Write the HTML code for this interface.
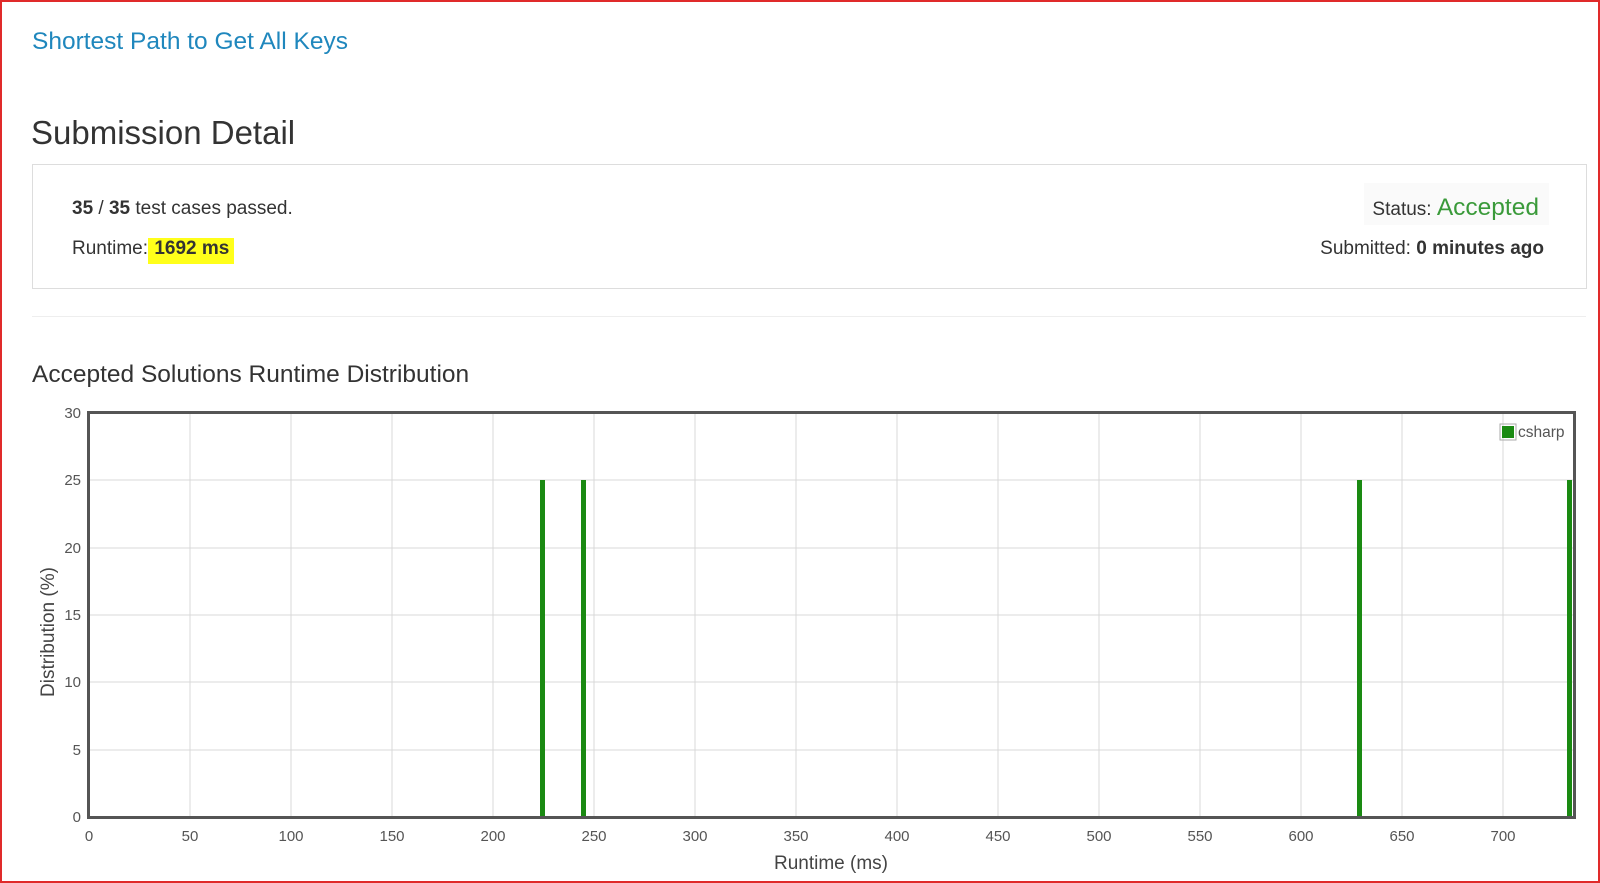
<!DOCTYPE html>
<html><head><meta charset="utf-8"><style>
html,body{margin:0;padding:0;background:#fff;}
body{width:1600px;height:883px;position:relative;overflow:hidden;font-family:"Liberation Sans",Arial,sans-serif;color:#333;}
.frame{position:absolute;left:0;top:0;width:1596px;height:879px;border:2px solid #e02a2a;}
.a{position:absolute;white-space:nowrap;}
</style></head><body>
<div class="frame"></div>
<div class="a" style="left:32px;top:28px;font-size:24.5px;color:#1f87bd;">Shortest Path to Get All Keys</div>
<div class="a" style="left:31px;top:114px;font-size:33px;color:#333;">Submission Detail</div>
<div class="a" style="left:32px;top:164px;width:1553px;height:123px;border:1px solid #ddd;"></div>
<div class="a" style="left:72px;top:198px;font-size:19px;"><b>35</b> / <b>35</b> test cases passed.</div>
<div class="a" style="left:148px;top:238px;width:86px;height:26px;background:#ffff1a;"></div>
<div class="a" style="left:72px;top:238px;font-size:19px;">Runtime: <b style="padding-left:1px">1692 ms</b></div>
<div class="a" style="left:1364px;top:183px;width:185px;height:42px;background:#fafafa;"></div>
<div class="a" style="right:61px;top:194px;font-size:19px;">Status: <span style="color:#3a9a3a;font-size:24.5px;">Accepted</span></div>
<div class="a" style="right:56px;top:238px;font-size:19px;">Submitted: <b>0 minutes ago</b></div>
<div class="a" style="left:32px;top:316px;width:1554px;height:1px;background:#eee;"></div>
<div class="a" style="left:32px;top:361px;font-size:24.5px;color:#333;">Accepted Solutions Runtime Distribution</div>
<svg class="a" style="left:0;top:0" width="1600" height="883" font-family="Liberation Sans, Arial, sans-serif" font-size="15" fill="#555">
<g stroke="#d8d8d8" stroke-width="1">
<line x1="88" y1="480" x2="1575" y2="480"/><line x1="88" y1="548" x2="1575" y2="548"/><line x1="88" y1="615" x2="1575" y2="615"/><line x1="88" y1="682" x2="1575" y2="682"/><line x1="88" y1="750" x2="1575" y2="750"/>
<line x1="190" y1="412" x2="190" y2="817"/><line x1="291" y1="412" x2="291" y2="817"/><line x1="392" y1="412" x2="392" y2="817"/><line x1="493" y1="412" x2="493" y2="817"/><line x1="594" y1="412" x2="594" y2="817"/><line x1="695" y1="412" x2="695" y2="817"/><line x1="796" y1="412" x2="796" y2="817"/><line x1="897" y1="412" x2="897" y2="817"/><line x1="998" y1="412" x2="998" y2="817"/><line x1="1099" y1="412" x2="1099" y2="817"/><line x1="1200" y1="412" x2="1200" y2="817"/><line x1="1301" y1="412" x2="1301" y2="817"/><line x1="1402" y1="412" x2="1402" y2="817"/><line x1="1503" y1="412" x2="1503" y2="817"/>
</g>
<g fill="#1a8a12"><rect x="540" y="480" width="5" height="337"/><rect x="581" y="480" width="5" height="337"/><rect x="1357" y="480" width="5" height="337"/><rect x="1567" y="480" width="5" height="337"/></g>
<rect x="88.5" y="412.5" width="1486" height="405" fill="none" stroke="#555" stroke-width="3"/>
<rect x="1500" y="424" width="16" height="16" fill="none" stroke="#aaa"/><rect x="1502" y="426" width="12" height="12" fill="#1a8a12"/>
<text x="1518" y="437" font-size="15.5">csharp</text>
<g text-anchor="end"><text x="81" y="822">0</text><text x="81" y="755">5</text><text x="81" y="687">10</text><text x="81" y="620">15</text><text x="81" y="553">20</text><text x="81" y="485">25</text><text x="81" y="418">30</text></g>
<g text-anchor="middle"><text x="89" y="841">0</text><text x="190" y="841">50</text><text x="291" y="841">100</text><text x="392" y="841">150</text><text x="493" y="841">200</text><text x="594" y="841">250</text><text x="695" y="841">300</text><text x="796" y="841">350</text><text x="897" y="841">400</text><text x="998" y="841">450</text><text x="1099" y="841">500</text><text x="1200" y="841">550</text><text x="1301" y="841">600</text><text x="1402" y="841">650</text><text x="1503" y="841">700</text></g>
<text x="831" y="869" text-anchor="middle" font-size="19" fill="#444">Runtime (ms)</text>
<text transform="translate(54,632) rotate(-90)" text-anchor="middle" font-size="19" fill="#444">Distribution (%)</text>
</svg>
</body></html>
